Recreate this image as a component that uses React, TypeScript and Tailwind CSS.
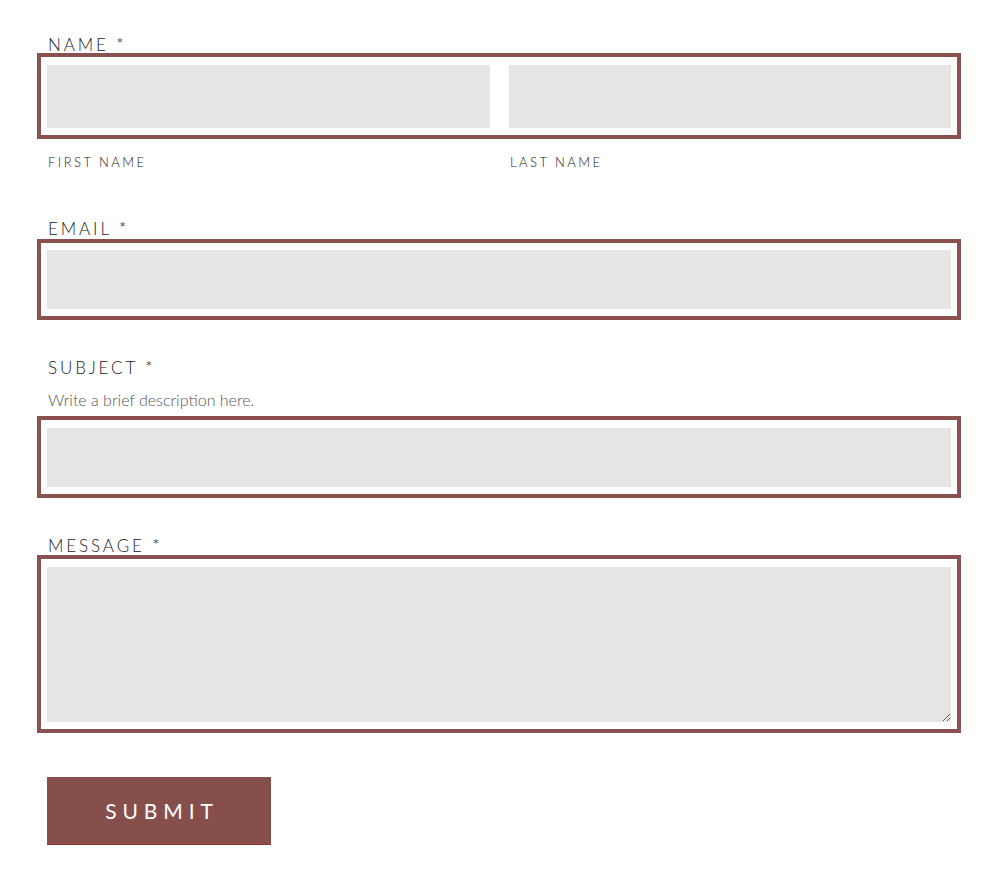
import { useState } from "react";

const labelCls =
  "block text-[17px] leading-[20px] font-light tracking-[0.17em] text-[#222] pl-[11px]";
const boxCls = "border-4 border-[#8b514e] px-[6px] py-[7px]";
const inputCls = "block w-full bg-[#e6e5e3] outline-none border-0 text-[15px] px-3";

export default function App() {
  const [values, setValues] = useState({ first: "", last: "", email: "", subject: "", message: "" });
  const set = (k: keyof typeof values) => (e: { target: { value: string } }) =>
    setValues({ ...values, [k]: e.target.value });

  return (
    <div className="min-h-[886px] bg-white" style={{ fontFamily: "Lato, 'Noto Sans', sans-serif" }}>
      <form className="ml-[37px] w-[924px] pt-[35px]" onSubmit={(e) => e.preventDefault()}>
        <label className={`${labelCls} mb-[-2px]`}>NAME *</label>
        <div className={`${boxCls} flex gap-[19px] pt-[8px]`}>
          <input className={`${inputCls} h-[63px]`} value={values.first} onChange={set("first")} />
          <input className={`${inputCls} h-[63px]`} value={values.last} onChange={set("last")} />
        </div>
        <div className="mt-[15px] flex gap-[19px] pl-[11px] text-[13px] leading-[16px] font-light tracking-[0.19em] text-[#222]">
          <span className="w-[443px]">FIRST NAME</span>
          <span>LAST NAME</span>
        </div>

        <label className={`${labelCls} mt-[49px]`}>EMAIL *</label>
        <div className={boxCls}>
          <input className={`${inputCls} h-[59px]`} value={values.email} onChange={set("email")} />
        </div>

        <label className={`${labelCls} mt-[38px]`}>SUBJECT *</label>
        <p className="mt-[12px] pl-[11px] text-[16px] leading-[19px] font-light text-[#555]">
          Write a brief description here.
        </p>
        <div className={`${boxCls} mt-[7px] pt-[8px]`}>
          <input className={`${inputCls} h-[59px]`} value={values.subject} onChange={set("subject")} />
        </div>

        <label className={`${labelCls} mt-[38px] mb-[-1px]`}>MESSAGE *</label>
        <div className={`${boxCls} pt-[8px]`}>
          <textarea
            className={`${inputCls} h-[155px] resize-y py-2`}
            value={values.message}
            onChange={set("message")}
          />
        </div>

        <button
          type="submit"
          className="mt-[44px] ml-[10px] flex h-[68px] w-[224px] items-center justify-center border-b border-[#9e2f2f] bg-[#874f4c] pl-[6px] text-[21px] tracking-[0.28em] text-white"
        >
          SUBMIT
        </button>
      </form>
    </div>
  );
}
